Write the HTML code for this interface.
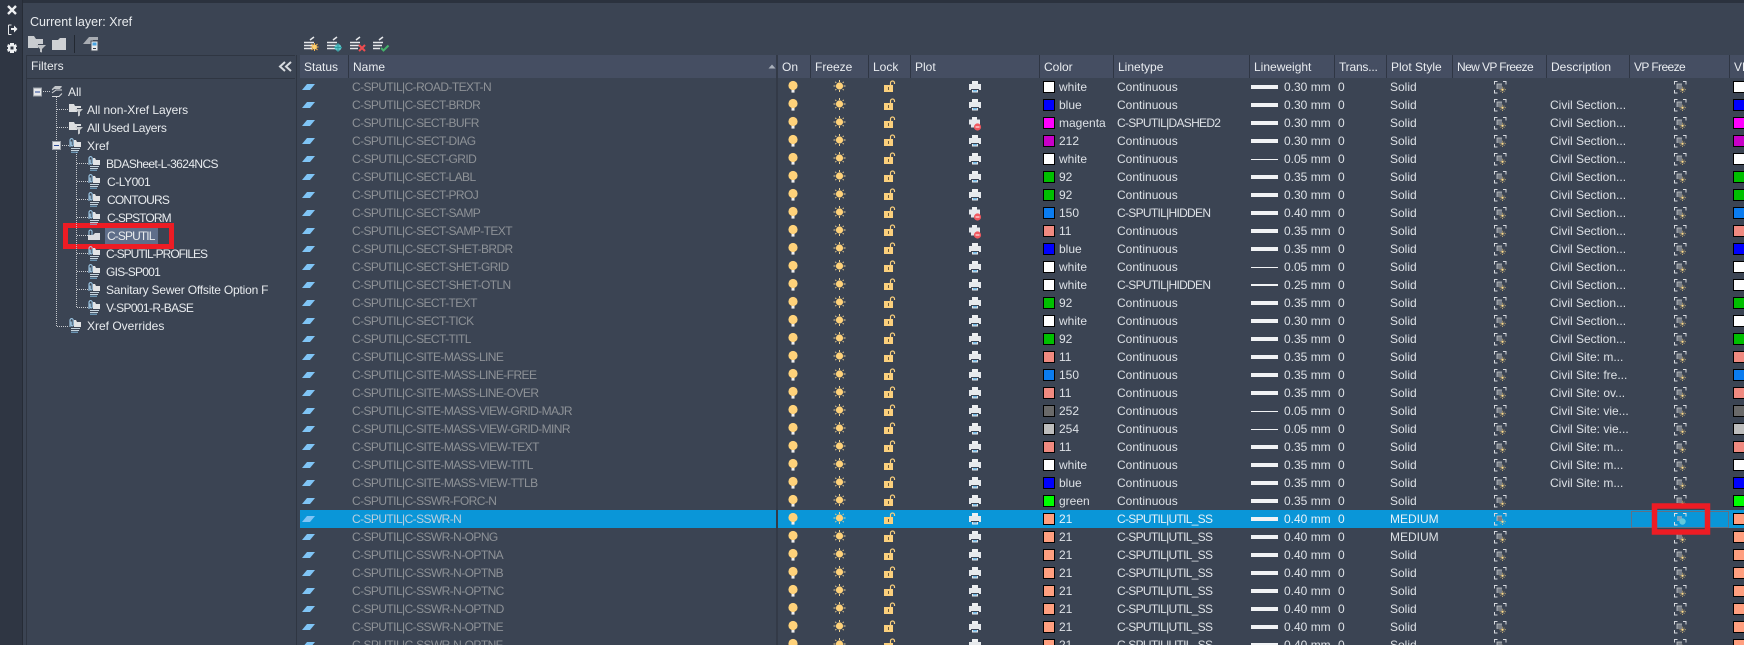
<!DOCTYPE html>
<html><head><meta charset="utf-8">
<style>
html,body{margin:0;padding:0;width:1744px;height:645px;overflow:hidden;background:#3b4453}
body{position:relative;font:12px/18px "Liberation Sans",sans-serif;color:#dde1e6}
.a{position:absolute}
#top{left:0;top:0;width:1744px;height:3px;background:#2b323e}
#strip{left:0;top:0;width:22px;height:645px;background:#2f3643;border-right:1px solid #262c36}
#fl{left:26px;top:55px;width:269px;height:590px;border-left:1px solid #2f3642;border-right:1px solid #2f3642}
#fh{left:27px;top:55px;width:268px;height:22px;background:#3b4453;border-top:1px solid #2f3642;border-bottom:1px solid #2f3642}
.t{position:absolute;white-space:nowrap;color:#e8ebee;height:18px}
#hd{left:300px;top:55px;width:1444px;height:23px;background:#454e62}
#hd span{position:absolute;top:0;height:23px;line-height:25px;padding-left:4px;border-left:1px solid #2f3644;color:#e9ecf0;white-space:nowrap}
table{position:absolute;left:300px;top:78px;border-collapse:collapse;table-layout:fixed;width:1444px}
td{padding:0;height:18px;line-height:18px;white-space:nowrap;overflow:hidden;color:#dde1e6}
td.n{color:#8e9297;letter-spacing:-.58px}
td.c{letter-spacing:-.7px}
tr.s td{background:#0a96d8;color:#e8f2f8}
tr.s td.n{color:#bcd0de}
b{display:inline-block;width:10px;height:10px;border:1px solid #000;margin-right:4px;vertical-align:-2px}
u{display:inline-block;width:27px;margin-right:6px;background:#f1f3f5;vertical-align:2px;height:4px;text-decoration:none}
u.h{height:1px;vertical-align:3px}
u.m{height:2px;vertical-align:3px}
.w{background:#fff}.l{background:#00f}.g{background:#f0f}.p{background:#c800c8}.e{background:#00c000}.z{background:#0f0}
.k{background:#0a7cf0}.o{background:#f08a80}.y{background:#696969}.v{background:#bdbdbd}.q{background:#ff9f7f}
svg{position:absolute;left:0;top:0}
</style></head><body>
<div class="a" id="top"></div>
<div class="a" id="strip"></div>
<div class="a" id="fl"></div>
<div class="a" id="fh"></div>
<div class="t" style="left:30px;top:13px;font-size:12.5px">Current layer: Xref</div>
<div class="t" style="left:31px;top:57px">Filters</div>
<div class="a" style="left:105px;top:228px;width:53px;height:16px;background:#5f6e8a"></div>
<div class="t" style="left:68px;top:83px">All</div>
<div class="t" style="left:87px;top:101px;letter-spacing:-.05px">All non-Xref Layers</div>
<div class="t" style="left:87px;top:119px;letter-spacing:-.3px">All Used Layers</div>
<div class="t" style="left:87px;top:137px">Xref</div>
<div class="t" style="left:106px;top:155px;letter-spacing:-.6px">BDASheet-L-3624NCS</div>
<div class="t" style="left:107px;top:173px;letter-spacing:-.47px">C-LY001</div>
<div class="t" style="left:107px;top:191px;letter-spacing:-.8px">CONTOURS</div>
<div class="t" style="left:107px;top:209px;letter-spacing:-.9px">C-SPSTORM</div>
<div class="t" style="left:107px;top:227px;letter-spacing:-.9px">C-SPUTIL</div>
<div class="t" style="left:106px;top:245px;letter-spacing:-1px">C-SPUTIL-PROFILES</div>
<div class="t" style="left:106px;top:263px;letter-spacing:-.74px">GIS-SP001</div>
<div class="t" style="left:106px;top:281px;letter-spacing:-.2px">Sanitary Sewer Offsite Option F</div>
<div class="t" style="left:106px;top:299px;letter-spacing:-.63px">V-SP001-R-BASE</div>
<div class="t" style="left:87px;top:317px">Xref Overrides</div>

<div class="a" id="hd">
<span style="left:0;border-left:0">Status</span>
<span style="left:48px">Name</span>
<span style="left:477px">On</span>
<span style="left:510px">Freeze</span>
<span style="left:568px">Lock</span>
<span style="left:610px">Plot</span>
<span style="left:739px">Color</span>
<span style="left:813px">Linetype</span>
<span style="left:949px">Lineweight</span>
<span style="left:1034px;letter-spacing:-.2px">Trans...</span>
<span style="left:1086px">Plot Style</span>
<span style="left:1152px;letter-spacing:-.6px">New VP Freeze</span>
<span style="left:1246px">Description</span>
<span style="left:1329px;letter-spacing:-.6px">VP Freeze</span>
<span style="left:1429px">VP</span>
</div>

<table>
<colgroup><col style="width:52px"><col style="width:691px"><col style="width:74px"><col style="width:134px"><col style="width:87px"><col style="width:52px"><col style="width:160px"><col style="width:183px"><col style="width:11px"></colgroup>
<tr><td></td><td class="n">C-SPUTIL|C-ROAD-TEXT-N</td><td><b class="w"></b>white</td><td>Continuous</td><td><u></u>0.30 mm</td><td>0</td><td>Solid</td><td></td><td><b class="w"></b></td></tr>
<tr><td></td><td class="n">C-SPUTIL|C-SECT-BRDR</td><td><b class="l"></b>blue</td><td>Continuous</td><td><u></u>0.30 mm</td><td>0</td><td>Solid</td><td>Civil Section...</td><td><b class="l"></b></td></tr>
<tr><td></td><td class="n">C-SPUTIL|C-SECT-BUFR</td><td><b class="g"></b>magenta</td><td class="c">C-SPUTIL|DASHED2</td><td><u></u>0.30 mm</td><td>0</td><td>Solid</td><td>Civil Section...</td><td><b class="g"></b></td></tr>
<tr><td></td><td class="n">C-SPUTIL|C-SECT-DIAG</td><td><b class="p"></b>212</td><td>Continuous</td><td><u></u>0.30 mm</td><td>0</td><td>Solid</td><td>Civil Section...</td><td><b class="p"></b></td></tr>
<tr><td></td><td class="n">C-SPUTIL|C-SECT-GRID</td><td><b class="w"></b>white</td><td>Continuous</td><td><u class="h"></u>0.05 mm</td><td>0</td><td>Solid</td><td>Civil Section...</td><td><b class="w"></b></td></tr>
<tr><td></td><td class="n">C-SPUTIL|C-SECT-LABL</td><td><b class="e"></b>92</td><td>Continuous</td><td><u></u>0.35 mm</td><td>0</td><td>Solid</td><td>Civil Section...</td><td><b class="e"></b></td></tr>
<tr><td></td><td class="n">C-SPUTIL|C-SECT-PROJ</td><td><b class="e"></b>92</td><td>Continuous</td><td><u></u>0.30 mm</td><td>0</td><td>Solid</td><td>Civil Section...</td><td><b class="e"></b></td></tr>
<tr><td></td><td class="n">C-SPUTIL|C-SECT-SAMP</td><td><b class="k"></b>150</td><td class="c">C-SPUTIL|HIDDEN</td><td><u></u>0.40 mm</td><td>0</td><td>Solid</td><td>Civil Section...</td><td><b class="k"></b></td></tr>
<tr><td></td><td class="n">C-SPUTIL|C-SECT-SAMP-TEXT</td><td><b class="o"></b>11</td><td>Continuous</td><td><u></u>0.35 mm</td><td>0</td><td>Solid</td><td>Civil Section...</td><td><b class="o"></b></td></tr>
<tr><td></td><td class="n">C-SPUTIL|C-SECT-SHET-BRDR</td><td><b class="l"></b>blue</td><td>Continuous</td><td><u></u>0.35 mm</td><td>0</td><td>Solid</td><td>Civil Section...</td><td><b class="l"></b></td></tr>
<tr><td></td><td class="n">C-SPUTIL|C-SECT-SHET-GRID</td><td><b class="w"></b>white</td><td>Continuous</td><td><u class="h"></u>0.05 mm</td><td>0</td><td>Solid</td><td>Civil Section...</td><td><b class="w"></b></td></tr>
<tr><td></td><td class="n">C-SPUTIL|C-SECT-SHET-OTLN</td><td><b class="w"></b>white</td><td class="c">C-SPUTIL|HIDDEN</td><td><u class="m"></u>0.25 mm</td><td>0</td><td>Solid</td><td>Civil Section...</td><td><b class="w"></b></td></tr>
<tr><td></td><td class="n">C-SPUTIL|C-SECT-TEXT</td><td><b class="e"></b>92</td><td>Continuous</td><td><u></u>0.35 mm</td><td>0</td><td>Solid</td><td>Civil Section...</td><td><b class="e"></b></td></tr>
<tr><td></td><td class="n">C-SPUTIL|C-SECT-TICK</td><td><b class="w"></b>white</td><td>Continuous</td><td><u></u>0.30 mm</td><td>0</td><td>Solid</td><td>Civil Section...</td><td><b class="w"></b></td></tr>
<tr><td></td><td class="n">C-SPUTIL|C-SECT-TITL</td><td><b class="e"></b>92</td><td>Continuous</td><td><u></u>0.35 mm</td><td>0</td><td>Solid</td><td>Civil Section...</td><td><b class="e"></b></td></tr>
<tr><td></td><td class="n">C-SPUTIL|C-SITE-MASS-LINE</td><td><b class="o"></b>11</td><td>Continuous</td><td><u></u>0.35 mm</td><td>0</td><td>Solid</td><td>Civil Site: m...</td><td><b class="o"></b></td></tr>
<tr><td></td><td class="n">C-SPUTIL|C-SITE-MASS-LINE-FREE</td><td><b class="k"></b>150</td><td>Continuous</td><td><u></u>0.35 mm</td><td>0</td><td>Solid</td><td>Civil Site: fre...</td><td><b class="k"></b></td></tr>
<tr><td></td><td class="n">C-SPUTIL|C-SITE-MASS-LINE-OVER</td><td><b class="o"></b>11</td><td>Continuous</td><td><u></u>0.35 mm</td><td>0</td><td>Solid</td><td>Civil Site: ov...</td><td><b class="o"></b></td></tr>
<tr><td></td><td class="n">C-SPUTIL|C-SITE-MASS-VIEW-GRID-MAJR</td><td><b class="y"></b>252</td><td>Continuous</td><td><u class="h"></u>0.05 mm</td><td>0</td><td>Solid</td><td>Civil Site: vie...</td><td><b class="y"></b></td></tr>
<tr><td></td><td class="n">C-SPUTIL|C-SITE-MASS-VIEW-GRID-MINR</td><td><b class="v"></b>254</td><td>Continuous</td><td><u class="h"></u>0.05 mm</td><td>0</td><td>Solid</td><td>Civil Site: vie...</td><td><b class="v"></b></td></tr>
<tr><td></td><td class="n">C-SPUTIL|C-SITE-MASS-VIEW-TEXT</td><td><b class="o"></b>11</td><td>Continuous</td><td><u></u>0.35 mm</td><td>0</td><td>Solid</td><td>Civil Site: m...</td><td><b class="o"></b></td></tr>
<tr><td></td><td class="n">C-SPUTIL|C-SITE-MASS-VIEW-TITL</td><td><b class="w"></b>white</td><td>Continuous</td><td><u></u>0.35 mm</td><td>0</td><td>Solid</td><td>Civil Site: m...</td><td><b class="w"></b></td></tr>
<tr><td></td><td class="n">C-SPUTIL|C-SITE-MASS-VIEW-TTLB</td><td><b class="l"></b>blue</td><td>Continuous</td><td><u></u>0.35 mm</td><td>0</td><td>Solid</td><td>Civil Site: m...</td><td><b class="l"></b></td></tr>
<tr><td></td><td class="n">C-SPUTIL|C-SSWR-FORC-N</td><td><b class="z"></b>green</td><td>Continuous</td><td><u></u>0.35 mm</td><td>0</td><td>Solid</td><td></td><td><b class="z"></b></td></tr>
<tr class="s"><td></td><td class="n">C-SPUTIL|C-SSWR-N</td><td><b class="q"></b>21</td><td class="c">C-SPUTIL|UTIL_SS</td><td><u></u>0.40 mm</td><td>0</td><td>MEDIUM</td><td></td><td><b class="q"></b></td></tr>
<tr><td></td><td class="n">C-SPUTIL|C-SSWR-N-OPNG</td><td><b class="q"></b>21</td><td class="c">C-SPUTIL|UTIL_SS</td><td><u></u>0.40 mm</td><td>0</td><td>MEDIUM</td><td></td><td><b class="q"></b></td></tr>
<tr><td></td><td class="n">C-SPUTIL|C-SSWR-N-OPTNA</td><td><b class="q"></b>21</td><td class="c">C-SPUTIL|UTIL_SS</td><td><u></u>0.40 mm</td><td>0</td><td>Solid</td><td></td><td><b class="q"></b></td></tr>
<tr><td></td><td class="n">C-SPUTIL|C-SSWR-N-OPTNB</td><td><b class="q"></b>21</td><td class="c">C-SPUTIL|UTIL_SS</td><td><u></u>0.40 mm</td><td>0</td><td>Solid</td><td></td><td><b class="q"></b></td></tr>
<tr><td></td><td class="n">C-SPUTIL|C-SSWR-N-OPTNC</td><td><b class="q"></b>21</td><td class="c">C-SPUTIL|UTIL_SS</td><td><u></u>0.40 mm</td><td>0</td><td>Solid</td><td></td><td><b class="q"></b></td></tr>
<tr><td></td><td class="n">C-SPUTIL|C-SSWR-N-OPTND</td><td><b class="q"></b>21</td><td class="c">C-SPUTIL|UTIL_SS</td><td><u></u>0.40 mm</td><td>0</td><td>Solid</td><td></td><td><b class="q"></b></td></tr>
<tr><td></td><td class="n">C-SPUTIL|C-SSWR-N-OPTNE</td><td><b class="q"></b>21</td><td class="c">C-SPUTIL|UTIL_SS</td><td><u></u>0.40 mm</td><td>0</td><td>Solid</td><td></td><td><b class="q"></b></td></tr>
<tr><td></td><td class="n">C-SPUTIL|C-SSWR-N-OPTNF</td><td><b class="q"></b>21</td><td class="c">C-SPUTIL|UTIL_SS</td><td><u></u>0.40 mm</td><td>0</td><td>Solid</td><td></td><td><b class="q"></b></td></tr>
</table>
<div class="a" style="left:776px;top:55px;width:2px;height:590px;background:#333a47"></div>

<svg width="1744" height="645" viewBox="0 0 1744 645">
<defs>
<g id="ri">
<path d="M302 90l5-6h8l-5 6z" fill="#7fc4f5"/>
<circle cx="793" cy="85.5" r="4.6" fill="#ffd27a"/><rect x="791.5" y="90" width="3" height="2.6" fill="#f1f1f1"/>
<circle cx="839.5" cy="86" r="3.6" fill="#ffd27a"/>
<path d="M839.5 80v2M839.5 90v2M833.5 86h2M843.5 86h2M835.3 81.8l1 1M842.7 89.2l1 1M843.7 81.8l-1 1M836.3 89.2l-1 1" stroke="#f3d48f" stroke-width="1" fill="none"/>
<rect x="884" y="85" width="9" height="7" fill="#fbd07c"/><rect x="888" y="87" width="1" height="3" fill="#6a5a3c"/>
<path d="M890.5 85v-2a2 2 0 0 1 4 0v1" fill="none" stroke="#fbd07c" stroke-width="1.2"/>
</g>
<g id="pr">
<rect x="972" y="81" width="6" height="3" fill="#eef0f2"/><rect x="969" y="84" width="12" height="6" fill="#e6e9ec"/><rect x="971" y="89" width="8" height="1" fill="#3b4453"/>
<rect x="972" y="90" width="6" height="2.5" fill="#e6e9ec"/><rect x="973" y="90" width="4" height="1.5" fill="#6cb6e6"/>
</g>
<g id="np">
<rect x="972" y="81" width="5" height="2.5" fill="#eef0f2"/><rect x="969" y="83.5" width="11" height="5" fill="#e6e9ec"/><rect x="971" y="88.5" width="5" height="3" fill="#e6e9ec"/>
<circle cx="977.5" cy="91" r="3.6" fill="#f0595f"/><rect x="975.5" y="90.5" width="4" height="1" fill="#fff"/>
</g>
<g id="vf">
<path d="M.5 3.5v-3h3M9 .5h3v3M.5 9v3h3" fill="none" stroke="#d6d9de" stroke-width="1"/>
<rect x="3" y="3" width="5" height="5" fill="#787e87"/><path d="M3 8V3h5" fill="none" stroke="#c5c8cd" stroke-width=".8"/>
<circle cx="8.5" cy="8.7" r="1.2" fill="#ffdc8c"/>
<path d="M8.5 5.8v1M8.5 10.8v1.2M5.6 8.7h1M10.6 8.7h1.2M6.6 10.6l.6-.6M10.4 6.8l-.6.6M10.4 10.6l-.6-.6" stroke="#d8bd7c" stroke-width=".8" fill="none"/>
</g>
<g id="vv"><use href="#vf" x="1494" y="81"/><use href="#vf" x="1674" y="81"/></g>
<g id="xr">
<path d="M1 9V2.2a1.6 1.6 0 0 1 3.2 0V7a1 1 0 0 1-2 0V3.5" fill="none" stroke="#a7d6f5" stroke-width="1"/>
<path d="M5 2h2l1 2h4v5H5z" fill="#e2e4e6"/>
<path d="M2 10.5h9M2 12.5h8" stroke="#c5d4de" stroke-width="1"/><path d="M2 14.2h7" stroke="#7fb6dc" stroke-width="1"/>
</g>
<g id="ff">
<path d="M0 1h5l1 2h6v2H8v4H0z" fill="#dcdee0"/><path d="M6 6h8l-3 3v3.5l-2 1V9z" fill="#c8cbce"/>
</g>
<g id="exp"><rect x=".5" y=".5" width="8" height="8" fill="#e7e8ea" stroke="#9aa0a8"/><rect x="2" y="4" width="5" height="1" fill="#2a4a9a"/></g>
</defs>

<use href="#ri"/><use href="#ri" y="18"/><use href="#ri" y="36"/><use href="#ri" y="54"/><use href="#ri" y="72"/><use href="#ri" y="90"/><use href="#ri" y="108"/><use href="#ri" y="126"/><use href="#ri" y="144"/><use href="#ri" y="162"/><use href="#ri" y="180"/><use href="#ri" y="198"/><use href="#ri" y="216"/><use href="#ri" y="234"/><use href="#ri" y="252"/><use href="#ri" y="270"/><use href="#ri" y="288"/><use href="#ri" y="306"/><use href="#ri" y="324"/><use href="#ri" y="342"/><use href="#ri" y="360"/><use href="#ri" y="378"/><use href="#ri" y="396"/><use href="#ri" y="414"/><use href="#ri" y="432"/><use href="#ri" y="450"/><use href="#ri" y="468"/><use href="#ri" y="486"/><use href="#ri" y="504"/><use href="#ri" y="522"/><use href="#ri" y="540"/><use href="#ri" y="558"/>

<use href="#pr"/><use href="#pr" y="18"/><use href="#np" y="36"/><use href="#pr" y="54"/><use href="#pr" y="72"/><use href="#pr" y="90"/><use href="#pr" y="108"/><use href="#np" y="126"/><use href="#np" y="144"/><use href="#pr" y="162"/><use href="#pr" y="180"/><use href="#pr" y="198"/><use href="#pr" y="216"/><use href="#pr" y="234"/><use href="#pr" y="252"/><use href="#pr" y="270"/><use href="#pr" y="288"/><use href="#pr" y="306"/><use href="#pr" y="324"/><use href="#pr" y="342"/><use href="#pr" y="360"/><use href="#pr" y="378"/><use href="#pr" y="396"/><use href="#pr" y="414"/><use href="#pr" y="432"/><use href="#pr" y="450"/><use href="#pr" y="468"/><use href="#pr" y="486"/><use href="#pr" y="504"/><use href="#pr" y="522"/><use href="#pr" y="540"/><use href="#pr" y="558"/>

<use href="#vv"/><use href="#vv" y="18"/><use href="#vv" y="36"/><use href="#vv" y="54"/><use href="#vv" y="72"/><use href="#vv" y="90"/><use href="#vv" y="108"/><use href="#vv" y="126"/><use href="#vv" y="144"/><use href="#vv" y="162"/><use href="#vv" y="180"/><use href="#vv" y="198"/><use href="#vv" y="216"/><use href="#vv" y="234"/><use href="#vv" y="252"/><use href="#vv" y="270"/><use href="#vv" y="288"/><use href="#vv" y="306"/><use href="#vv" y="324"/><use href="#vv" y="342"/><use href="#vv" y="360"/><use href="#vv" y="378"/><use href="#vv" y="396"/><use href="#vv" y="414"/>
<use href="#vf" x="1494" y="513"/>
<use href="#vv" y="450"/><use href="#vv" y="468"/><use href="#vv" y="486"/><use href="#vv" y="504"/><use href="#vv" y="522"/><use href="#vv" y="540"/><use href="#vv" y="558"/>

<!-- selected row VP cell -->
<rect x="1631.5" y="511.5" width="97" height="16" fill="none" stroke="#5f7287"/>
<path d="M1674.5 516.5v-3h3M1683 513.5h3v3M1674.5 522v3h3" fill="none" stroke="#dfe3e6"/><rect x="1677" y="516" width="5" height="5" fill="#7fa6bf"/>
<circle cx="1682.5" cy="521.5" r="3.2" fill="#62c8dc"/>

<!-- red annotation boxes -->
<rect x="1654.5" y="506" width="53" height="26" fill="none" stroke="#ed1c24" stroke-width="5.5"/>
<rect x="65.5" y="225.5" width="106" height="21" fill="none" stroke="#ed1c24" stroke-width="5"/>

<!-- sort triangle -->
<path d="M768.5 68.5l3.5-4 3.5 4z" fill="#aab0ba"/>

<!-- collapse chevrons -->
<path d="M285 62l-5 4.5 5 4.5M291 62l-5 4.5 5 4.5" fill="none" stroke="#d8dbdf" stroke-width="2"/>

<!-- left strip icons -->
<path d="M8 6l8 8M16 6l-8 8" stroke="#eef0f2" stroke-width="2.4"/>
<path d="M8.5 25v9.5M8.5 25h3M8.5 34.5h3" stroke="#e6e8ea" fill="none"/><path d="M11 28h3v-2.5l3.5 3.5-3.5 3.5V30h-3z" fill="#eef0f2"/>
<path d="M10 43h4v2l2-1 1 3h-1v2h1l-1 3-2-1v2h-4v-2l-2 1-1-3h1v-2H7l1-3 2 1z" fill="#eef0f2"/><rect x="10.5" y="46.5" width="3" height="3" fill="#2f3643"/>

<!-- filter toolbar -->
<path d="M28 36h6l2 3h7v5h-5v4h-10z" fill="#c9ccd0"/><path d="M36 45h10l-4 4v3.5l-2-.5v-3z" fill="#bfc2c6"/>
<path d="M52 40h6l2-2h6v12H52z" fill="#cfd1d4"/>
<rect x="74" y="35" width="1" height="18" fill="#222831"/>
<path d="M83 44l6-7h9v3h-5v4z" fill="#a8acb2"/><rect x="91" y="41" width="7" height="10" fill="#e8eaec" stroke="#444c58" stroke-width="1"/><rect x="92.5" y="42.5" width="4" height="3" fill="#48a3e0"/><path d="M93 48.5h3" stroke="#333a46"/>

<!-- layer toolbar -->
<g fill="none" stroke="#e6e8eb" stroke-width="1.5"><path d="M304 42.5h10M304 45.5h10M304 48.5h8"/><path d="M310 40l4-3"/></g>
<path d="M314.5 43v8M310.5 47h8M311.5 44l6 6M317.5 44l-6 6" stroke="#f6b04a"/><circle cx="314.5" cy="47" r="2.4" fill="#ffcf6c"/>
<g fill="none" stroke="#e6e8eb" stroke-width="1.5"><path d="M327 42.5h10M327 45.5h9M327 48.5h8"/><path d="M333 40l4-3"/></g>
<circle cx="338" cy="47.5" r="3.4" fill="#5cc4c8"/><path d="M338 43v9M334 47.5h8" stroke="#2e9ba0"/>
<g fill="none" stroke="#e6e8eb" stroke-width="1.5"><path d="M350 42.5h10M350 45.5h9M350 48.5h8"/><path d="M356 40l4-3"/></g>
<path d="M359 45l6 6M365 45l-6 6" stroke="#ef4c50" stroke-width="2"/>
<g fill="none" stroke="#e6e8eb" stroke-width="1.5"><path d="M373 42.5h10M373 45.5h9M373 48.5h7"/><path d="M379 40l4-3"/></g>
<path d="M381 48l2.5 2.5 5-5" fill="none" stroke="#45b36b" stroke-width="2"/>

<!-- tree lines -->
<g stroke="#c6c9cd" stroke-dasharray="1 1" fill="none">
<path d="M56.5 97V326M43 91.5h7M62 145.5h7M57 109.5h11M57 127.5h11M57 326.5h11"/>
<path d="M76.5 150V308M77 163.5h11M77 181.5h11M77 199.5h11M77 217.5h11M77 235.5h11M77 253.5h11M77 271.5h11M77 289.5h11M77 307.5h11"/>
</g>
<use href="#exp" x="33" y="87.5"/><use href="#exp" x="52" y="141"/>
<g fill="none" stroke="#d8dadd"><path d="M52 90l4-3h5.5M52 93l4-3h6M52 96.5h7l3-3"/></g><path d="M51 90l4-4h7l-2 3h-8z" fill="#c2c5c9"/>
<use href="#ff" x="69" y="103"/><use href="#ff" x="69" y="121"/>
<use href="#xr" x="69" y="138"/>
<use href="#xr" x="88" y="156"/><use href="#xr" x="88" y="174"/><use href="#xr" x="88" y="192"/><use href="#xr" x="88" y="210"/>
<path d="M89 238v-7a1.6 1.6 0 0 1 3 0v5" fill="none" stroke="#a7d6f5"/><path d="M88 240v-5h5l2-2h5v7z" fill="#dcdde0"/>
<use href="#xr" x="88" y="246"/><use href="#xr" x="88" y="264"/><use href="#xr" x="88" y="282"/><use href="#xr" x="88" y="300"/>
<use href="#xr" x="69" y="318"/>
</svg>
</body></html>
